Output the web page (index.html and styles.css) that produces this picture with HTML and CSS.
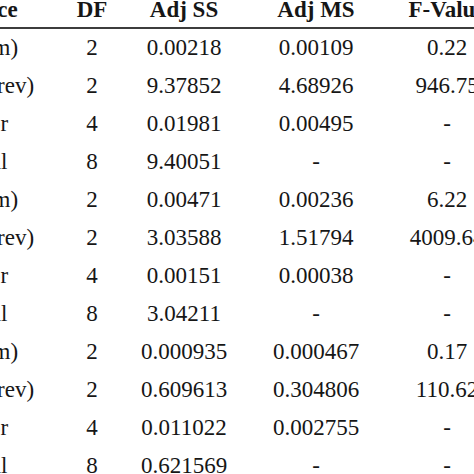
FILE: index.html
```html
<!DOCTYPE html>
<html>
<head>
<meta charset="utf-8">
<link rel="stylesheet" href="styles.css">
</head>
<body>
<div class="table">
  <div class="row head">
    <div class="c src">Source</div><div class="c">DF</div><div class="c">Adj SS</div><div class="c">Adj MS</div><div class="c">F-Value</div><div class="c">P-Value</div>
  </div>
  <div class="row"><div class="c src">d (mm)</div><div class="c">2</div><div class="c">0.00218</div><div class="c">0.00109</div><div class="c">0.22</div><div class="c">0.810</div></div>
  <div class="row"><div class="c src">f (mm/rev)</div><div class="c">2</div><div class="c">9.37852</div><div class="c">4.68926</div><div class="c">946.75</div><div class="c">0.000</div></div>
  <div class="row"><div class="c src">Error</div><div class="c">4</div><div class="c">0.01981</div><div class="c">0.00495</div><div class="c">-</div><div class="c">-</div></div>
  <div class="row"><div class="c src">Total</div><div class="c">8</div><div class="c">9.40051</div><div class="c">-</div><div class="c">-</div><div class="c">-</div></div>
  <div class="row"><div class="c src">d (mm)</div><div class="c">2</div><div class="c">0.00471</div><div class="c">0.00236</div><div class="c">6.22</div><div class="c">0.059</div></div>
  <div class="row"><div class="c src">f (mm/rev)</div><div class="c">2</div><div class="c">3.03588</div><div class="c">1.51794</div><div class="c">4009.64</div><div class="c">0.000</div></div>
  <div class="row"><div class="c src">Error</div><div class="c">4</div><div class="c">0.00151</div><div class="c">0.00038</div><div class="c">-</div><div class="c">-</div></div>
  <div class="row"><div class="c src">Total</div><div class="c">8</div><div class="c">3.04211</div><div class="c">-</div><div class="c">-</div><div class="c">-</div></div>
  <div class="row"><div class="c src">d (mm)</div><div class="c">2</div><div class="c">0.000935</div><div class="c">0.000467</div><div class="c">0.17</div><div class="c">0.850</div></div>
  <div class="row"><div class="c src">f (mm/rev)</div><div class="c">2</div><div class="c">0.609613</div><div class="c">0.304806</div><div class="c">110.62</div><div class="c">0.000</div></div>
  <div class="row"><div class="c src">Error</div><div class="c">4</div><div class="c">0.011022</div><div class="c">0.002755</div><div class="c">-</div><div class="c">-</div></div>
  <div class="row"><div class="c src">Total</div><div class="c">8</div><div class="c">0.621569</div><div class="c">-</div><div class="c">-</div><div class="c">-</div></div>
</div>
</body>
</html>
```
FILE: styles.css
```css
html, body {
  margin: 0;
  padding: 0;
  background: #ffffff;
  overflow: hidden;
}
body {
  width: 474px;
  height: 474px;
  font-family: "Liberation Serif", "DejaVu Serif", serif;
  color: #161616;
}
.table {
  margin-left: -86px;
  width: 680px;
}
.row {
  display: grid;
  grid-template-columns: 140px 76px 108px 156px 106px 94px;
  font-size: 23px;
  line-height: 38px;
  white-space: nowrap;
}
.head {
  font-weight: bold;
  line-height: 19px;
  padding-bottom: 8px;
  border-bottom: 2px solid #3c3c3c;
}
.c {
  text-align: center;
}
```
